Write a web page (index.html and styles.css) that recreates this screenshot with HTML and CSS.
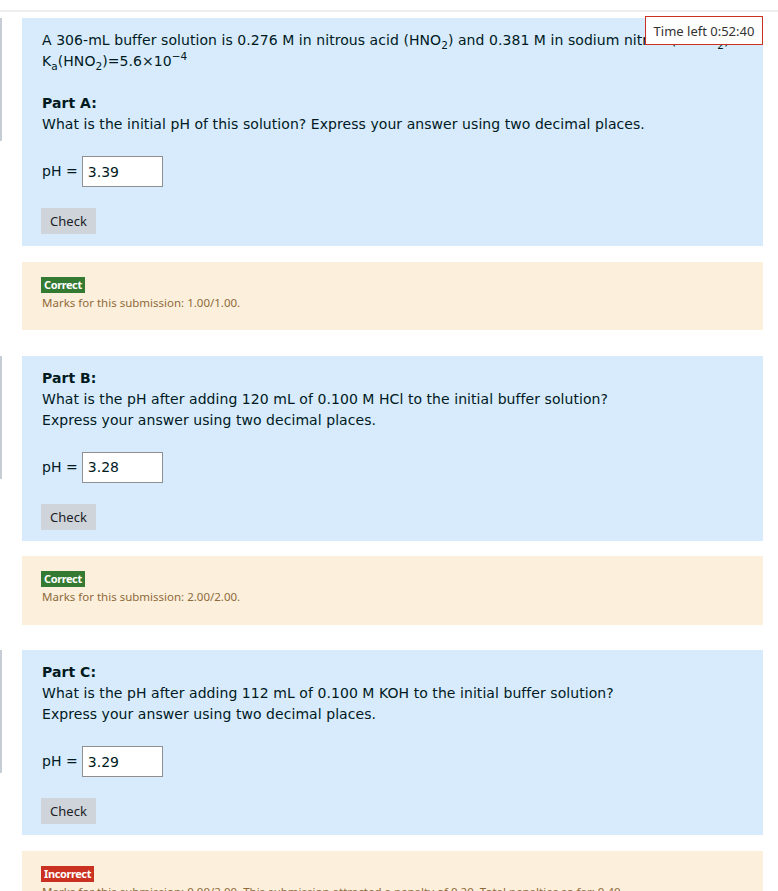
FILE: index.html
```html
<!DOCTYPE html>
<html>
<head>
<meta charset="utf-8">
<link rel="stylesheet" href="styles.css">
</head>
<body>
<div class="topbar"></div>
<div class="timer">Time left 0:52:40</div>
<main class="page">
  <section class="que">
    <div class="side"></div>
    <div class="content">
      <div class="formulation first">
        <p class="intro">A 306-mL buffer solution is 0.276 M in nitrous acid (HNO<sub>2</sub>) and 0.381 M in sodium nitrite (NaNO<sub>2</sub>).<br>K<sub>a</sub>(HNO<sub>2</sub>)=5.6×10<sup>−4</sup></p>
        <p class="part">Part A:</p>
        <p>What is the initial pH of this solution? Express your answer using two decimal places.</p>
        <div class="answer"><span class="label">pH =</span><input class="field" type="text" value="3.39"></div>
        <div class="controls"><button class="check">Check</button></div>
      </div>
      <div class="outcome">
        <span class="badge good">Correct</span>
        <div class="marks">Marks for this submission: 1.00/1.00.</div>
      </div>
    </div>
  </section>

  <section class="que">
    <div class="side"></div>
    <div class="content">
      <div class="formulation">
        <p class="part">Part B:</p>
        <p>What is the pH after adding 120 mL of 0.100 M HCl to the initial buffer solution?<br>Express your answer using two decimal places.</p>
        <div class="answer"><span class="label">pH =</span><input class="field" type="text" value="3.28"></div>
        <div class="controls"><button class="check">Check</button></div>
      </div>
      <div class="outcome">
        <span class="badge good">Correct</span>
        <div class="marks">Marks for this submission: 2.00/2.00.</div>
      </div>
    </div>
  </section>

  <section class="que">
    <div class="side"></div>
    <div class="content">
      <div class="formulation">
        <p class="part">Part C:</p>
        <p>What is the pH after adding 112 mL of 0.100 M KOH to the initial buffer solution?<br>Express your answer using two decimal places.</p>
        <div class="answer"><span class="label">pH =</span><input class="field" type="text" value="3.29"></div>
        <div class="controls"><button class="check">Check</button></div>
      </div>
      <div class="outcome">
        <span class="badge bad">Incorrect</span>
        <div class="marks">Marks for this submission: 0.00/2.00. This submission attracted a penalty of 0.20. Total penalties so far: 0.40.</div>
      </div>
    </div>
  </section>
</main>
</body>
</html>
```

FILE: styles.css
```css
html, body {
  margin: 0;
  padding: 0;
  background: #ffffff;
}
body {
  font-family: "DejaVu Sans", Verdana, sans-serif;
  font-size: 14px;
  color: #001a1e;
}
.topbar {
  height: 10px;
  border-bottom: 2px solid #efefef;
}
.timer {
  position: absolute;
  top: 16px;
  left: 645px;
  width: 116px;
  height: 27px;
  border: 1px solid #ca3120;
  background: #ffffff;
  font-family: "Noto Sans", "Open Sans", sans-serif;
  font-size: 13px;
  color: #333333;
  display: flex;
  align-items: center;
  justify-content: center;
}
.page {
  padding-top: 6px;
}
.que {
  display: flex;
  align-items: flex-start;
  margin-bottom: 25.5px;
}
.side {
  width: 2px;
  height: 123px;
  background: #c7cdd4;
  flex: none;
  margin-right: 20px;
}
.content {
  width: 741px;
}
.formulation {
  background: #d7ebfc;
  padding: 12px 20px 11px;
  line-height: 21px;
  letter-spacing: 0.06px;
}
.formulation.first {
  padding-bottom: 12px;
}
.formulation p {
  margin: 0;
}
.formulation .intro {
  margin-bottom: 21px;
}
.part {
  font-weight: bold;
}
sub, sup {
  font-size: 10.5px;
  line-height: 0;
}
.answer {
  margin-top: 21px;
  display: flex;
  align-items: center;
  height: 31px;
}
.label {
  margin-right: 4px;
}
.field {
  width: 81px;
  height: 31px;
  box-sizing: border-box;
  border: 1px solid #8f8f8f;
  background: #ffffff;
  font-family: "DejaVu Sans", Verdana, sans-serif;
  font-size: 14px;
  color: #001a1e;
  padding: 0 5px;
  margin: 0;
}
.controls {
  margin-top: 21px;
  height: 26px;
}
.check {
  margin: 0 0 0 -1px;
  width: 55px;
  height: 26px;
  border: none;
  background: #ced4da;
  color: #1d2125;
  font-family: "Noto Sans", "Open Sans", sans-serif;
  font-size: 13px;
  padding: 0;
  letter-spacing: 0;
}
.outcome {
  margin-top: 15.5px;
  background: #fcefdc;
  padding: 15px 20px 18.5px 19px;
  font-family: "Noto Sans", "Open Sans", sans-serif;
  color: #8e6a3a;
}
.badge {
  display: block;
  width: fit-content;
  height: 16px;
  line-height: 16px;
  padding: 0 3px;
  color: #ffffff;
  font-weight: bold;
  font-size: 11px;
  letter-spacing: -0.4px;
}
.good {
  background: #357a32;
}
.bad {
  background: #ca3120;
}
.marks {
  font-size: 11.5px;
  line-height: 18px;
  margin-top: 1px;
  margin-left: 1px;
}
```
